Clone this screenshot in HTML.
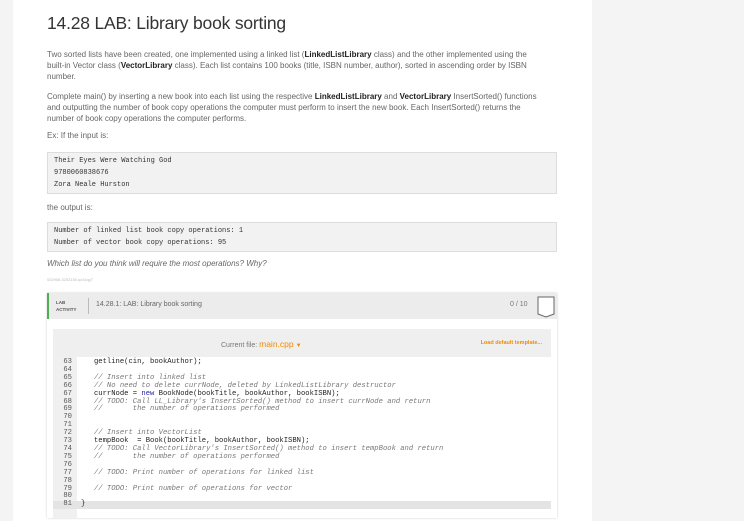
<!DOCTYPE html>
<html><head><style>
body{margin:0;width:744px;height:521px;background:#f4f4f4;overflow:hidden;font-family:"Liberation Sans",sans-serif;color:#555}
.card{position:absolute;left:13px;top:0;width:579px;height:521px;background:#fff}
h1{position:absolute;left:34px;top:13px;margin:0;font-weight:normal;font-size:17.5px;color:#333;letter-spacing:-0.2px}
.p{position:absolute;left:34px;font-size:8px;line-height:11px;color:#666;white-space:nowrap}
b{color:#222}
.box{position:absolute;left:34px;width:510px;background:#f2f2f2;border:1px solid #ddd;font-family:"Liberation Mono",monospace;font-size:7px;line-height:12px;color:#333;padding:2px 6px;box-sizing:border-box}
.lab{position:absolute;left:34px;top:293px;width:510px;height:225px;background:#fff;box-shadow:0 0 2px #ccc}
.hdr{height:26px;background:#ececec;border-left:2px solid #4caf50;position:relative}
.ed{position:absolute;left:6px;top:36px;width:498px;height:189px;background:#efefef}
.code{position:absolute;left:0;top:28px;width:498px;height:161px;background:#fff;font-family:"Liberation Mono",monospace;font-size:7.2px;line-height:7.9px;color:#222}
.gut{position:absolute;left:0;top:0;width:24px;height:161px;background:#f0f0f0}
.nums{position:absolute;left:0;top:2px;width:19px;text-align:right;color:#555}
.c{color:#777;font-style:italic}
</style></head><body>
<div class="card">
<h1>14.28 LAB: Library book sorting</h1>
<div class="p" style="top:49px">Two sorted lists have been created, one implemented using a linked list (<b>LinkedListLibrary</b> class) and the other implemented using the<br>built-in Vector class (<b>VectorLibrary</b> class). Each list contains 100 books (title, ISBN number, author), sorted in ascending order by ISBN<br>number.</div>
<div class="p" style="top:91px">Complete main() by inserting a new book into each list using the respective <b>LinkedListLibrary</b> and <b>VectorLibrary</b> InsertSorted() functions<br>and outputting the number of book copy operations the computer must perform to insert the new book. Each InsertSorted() returns the<br>number of book copy operations the computer performs.</div>
<div class="p" style="top:130px">Ex: If the input is:</div>
<div class="box" style="top:152px;height:42px">Their Eyes Were Watching God<br>9780060838676<br>Zora Neale Hurston</div>
<div class="p" style="top:202px">the output is:</div>
<div class="box" style="top:222px;height:30px">Number of linked list book copy operations: 1<br>Number of vector book copy operations: 95</div>
<div class="p" style="top:258px;font-style:italic">Which list do you think will require the most operations? Why?</div>
<div class="p" style="top:274px;font-size:4px;color:#bbb">532908.3253150.qx3zqy7</div>
<div class="lab">
 <div class="hdr">
  <div style="position:absolute;left:7px;top:6px;font-size:4.5px;line-height:7px;font-weight:bold;color:#555">LAB<br>ACTIVITY</div>
  <div style="position:absolute;left:39px;top:5px;width:1px;height:16px;background:#bbb"></div>
  <div style="position:absolute;left:47px;top:8px;font-size:7px;color:#666">14.28.1: LAB: Library book sorting</div>
  <div style="position:absolute;left:461px;top:8px;font-size:7px;color:#777">0 / 10</div>
  <svg style="position:absolute;left:488px;top:3px" width="18" height="22"><path d="M1 1H17V18L9 21L1 18Z" fill="#fff" stroke="#666" stroke-width="1"/></svg>
 </div>
 <div class="ed">
  <div style="position:absolute;left:168px;top:10px;font-size:7px;color:#777">Current file: <span style="color:#f08c00;font-size:8.5px">main.cpp</span> <span style="color:#f08c00;font-size:6px">▼</span></div>
  <div style="position:absolute;right:9px;top:11px;font-size:5.5px;color:#f08c00;font-weight:bold">Load default template...</div>
  <div class="code">
   <div class="gut"></div>
   <div style="position:absolute;left:0;top:144px;width:498px;height:8px;background:#e4e4e4"></div>
   <div class="nums">63<br>64<br>65<br>66<br>67<br>68<br>69<br>70<br>71<br>72<br>73<br>74<br>75<br>76<br>77<br>78<br>79<br>80<br>81</div>
   <pre style="margin:0;position:absolute;left:28px;top:2px;font:inherit">   getline(cin, bookAuthor);

   <span class="c">// Insert into linked list</span>
   <span class="c">// No need to delete currNode, deleted by LinkedListLibrary destructor</span>
   currNode = <span style="color:#22a">new</span> BookNode(bookTitle, bookAuthor, bookISBN);
   <span class="c">// TODO: Call LL_Library's InsertSorted() method to insert currNode and return</span>
   <span class="c">//       the number of operations performed</span>


   <span class="c">// Insert into VectorList</span>
   tempBook  = Book(bookTitle, bookAuthor, bookISBN);
   <span class="c">// TODO: Call VectorLibrary's InsertSorted() method to insert tempBook and return</span>
   <span class="c">//       the number of operations performed</span>

   <span class="c">// TODO: Print number of operations for linked list</span>

   <span class="c">// TODO: Print number of operations for vector</span>

}</pre>
  </div>
 </div>
</div>
</div>
</body></html>
